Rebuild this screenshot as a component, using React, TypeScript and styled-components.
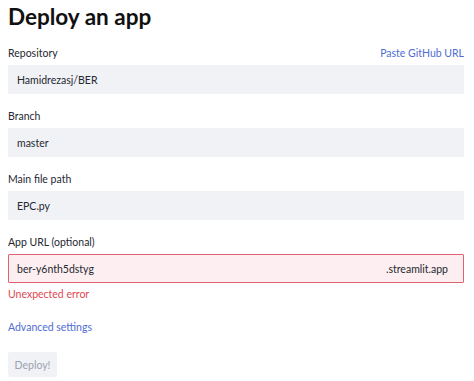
import React from "react";
import styled, { createGlobalStyle } from "styled-components";

const Global = createGlobalStyle`
  html, body { margin: 0; padding: 0; background: #ffffff; }
  body { font-family: Lato, "Noto Sans", "Liberation Sans", sans-serif; color: #31333f; }
  * { box-sizing: border-box; }
`;

const Page = styled.div`
  width: 474px;
  padding: 0 10px 0 8px;
  display: flex;
  flex-direction: column;
`;

const Title = styled.h1`
  margin: 0 0 11px 0;
  font-size: 22.5px;
  font-weight: 700;
  line-height: 34px;
  color: #111111;
`;

const Field = styled.div<{ $gap?: number }>`
  display: flex;
  flex-direction: column;
  gap: 4px;
  margin-bottom: ${(p) => p.$gap ?? 14}px;
`;

const LabelRow = styled.div`
  display: flex;
  justify-content: space-between;
  align-items: center;
  height: 16px;
`;

const Label = styled.span`
  font-size: 10.5px;
  line-height: 16px;
  color: #262730;
`;

const Link = styled.a`
  font-size: 10.5px;
  line-height: 16px;
  color: #4f6cd4;
  text-decoration: none;
  cursor: pointer;
`;

const Input = styled.div<{ $error?: boolean }>`
  height: 29px;
  display: flex;
  align-items: center;
  justify-content: space-between;
  padding: 0 15px 0 ${(p) => (p.$error ? 8 : 9)}px;
  background: ${(p) => (p.$error ? "#fdeff1" : "#f0f2f6")};
  border: ${(p) => (p.$error ? "1px solid #e0646f" : "none")};
  border-radius: 1px;
  font-size: 10.5px;
  color: #262730;
`;

const ErrorText = styled.div`
  margin-top: 3px;
  font-size: 10.5px;
  line-height: 16px;
  color: #e0474f;
`;

const Advanced = styled(Link)`
  display: block;
  margin-top: 17px;
`;

const Button = styled.button`
  margin-top: 17px;
  align-self: flex-start;
  width: 49px;
  height: 25px;
  border: none;
  border-radius: 2px;
  background: #f0f2f6;
  color: #9ea2b0;
  font-family: Lato, "Noto Sans", "Liberation Sans", sans-serif;
  font-size: 10.5px;
  padding: 0;
`;

export default function App() {
  return (
    <>
      <Global />
      <Page>
        <Title>Deploy an app</Title>
        <Field>
          <LabelRow>
            <Label>Repository</Label>
            <Link>Paste GitHub URL</Link>
          </LabelRow>
          <Input>Hamidrezasj/BER</Input>
        </Field>
        <Field>
          <LabelRow>
            <Label>Branch</Label>
          </LabelRow>
          <Input>master</Input>
        </Field>
        <Field>
          <LabelRow>
            <Label>Main file path</Label>
          </LabelRow>
          <Input>EPC.py</Input>
        </Field>
        <Field $gap={0}>
          <LabelRow>
            <Label>App URL (optional)</Label>
          </LabelRow>
          <Input $error>
            <span>ber-y6nth5dstyg</span>
            <span>.streamlit.app</span>
          </Input>
        </Field>
        <ErrorText>Unexpected error</ErrorText>
        <Advanced>Advanced settings</Advanced>
        <Button>Deploy!</Button>
      </Page>
    </>
  );
}
